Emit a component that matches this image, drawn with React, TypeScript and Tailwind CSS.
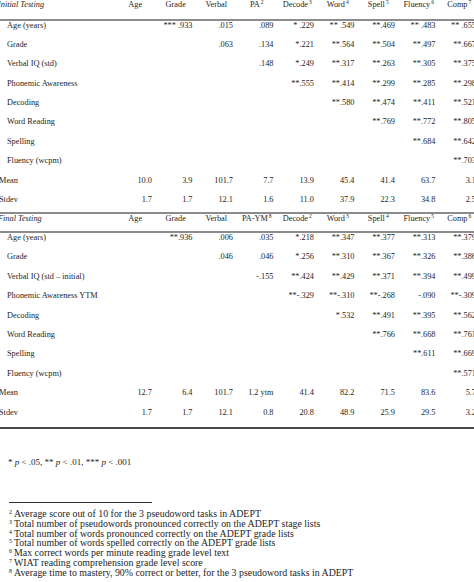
import React from 'react';

/**
 * Correlation table (initial / final testing) with footnotes.
 * Times-like serif, tight rows, right-aligned values.
 */

type RowData = { label: string; vals: string[]; indent?: boolean };

const initialRows: RowData[] = [
  { label: 'Age (years)', indent: true, vals: ['', '*** .933', '.015', '.089', '* .229', '** .549', '**.469', '** .483', '** .655'] },
  { label: 'Grade', indent: true, vals: ['', '', '.063', '.134', '*.221', '**.564', '**.504', '**.497', '**.667'] },
  { label: 'Verbal IQ (std)', indent: true, vals: ['', '', '', '.148', '*.249', '**.317', '**.263', '**.305', '**.375'] },
  { label: 'Phonemic Awareness', indent: true, vals: ['', '', '', '', '**.555', '**.414', '**.299', '**.285', '**.298'] },
  { label: 'Decoding', indent: true, vals: ['', '', '', '', '', '**.580', '**.474', '**.411', '**.521'] },
  { label: 'Word Reading', indent: true, vals: ['', '', '', '', '', '', '**.769', '**.772', '**.805'] },
  { label: 'Spelling', indent: true, vals: ['', '', '', '', '', '', '', '**.684', '**.642'] },
  { label: 'Fluency (wcpm)', indent: true, vals: ['', '', '', '', '', '', '', '', '**.703'] },
  { label: 'Mean', vals: ['10.0', '3.9', '101.7', '7.7', '13.9', '45.4', '41.4', '63.7', '3.1'] },
];
const initialStdev = ['1.7', '1.7', '12.1', '1.6', '11.0', '37.9', '22.3', '34.8', '2.5'];

const finalRows: RowData[] = [
  { label: 'Age (years)', indent: true, vals: ['', '**.936', '.006', '.035', '*.218', '**.347', '**.377', '**.313', '**.379'] },
  { label: 'Grade', indent: true, vals: ['', '', '.046', '.046', '*.256', '**.310', '**.367', '**.326', '**.386'] },
  { label: 'Verbal IQ (std – initial)', indent: true, vals: ['', '', '', '-.155', '**.424', '**.429', '**.371', '**.394', '**.499'] },
  { label: 'Phonemic Awareness YTM', indent: true, vals: ['', '', '', '', '**-.329', '**-.310', '**-.268', '-.090', '**-.309'] },
  { label: 'Decoding', indent: true, vals: ['', '', '', '', '', '*.532', '**.491', '**.395', '**.562'] },
  { label: 'Word Reading', indent: true, vals: ['', '', '', '', '', '', '**.766', '**.668', '**.761'] },
  { label: 'Spelling', indent: true, vals: ['', '', '', '', '', '', '', '**.611', '**.669'] },
  { label: 'Fluency (wcpm)', indent: true, vals: ['', '', '', '', '', '', '', '', '**.571'] },
  { label: 'Mean', vals: ['12.7', '6.4', '101.7', '1.2 ytm', '41.4', '82.2', '71.5', '83.6', '5.7'] },
  { label: 'Stdev', vals: ['1.7', '1.7', '12.1', '0.8', '20.8', '48.9', '25.9', '29.5', '3.2'] },
];

const Sup = ({ n }: { n: string }) => (
  <sup className="text-[5.5px] top-[-3px] ml-[1px]">{n}</sup>
);

const Row = ({ label, vals, indent, h = 'h-[19.4px]' }: RowData & { h?: string }) => (
  <div className={`grid grid-cols-[113.5px_repeat(9,40.5px)] ${h}`}>
    <div className={indent ? 'pl-[9px]' : 'pl-[1px]'}>{label}</div>
    {vals.map((v, i) => (
      <div key={i} className="text-right whitespace-pre">{v}</div>
    ))}
  </div>
);

const Header = ({ title, cols, h }: { title: string; cols: [string, string][]; h: string }) => (
  <div className={`grid grid-cols-[113.5px_repeat(9,40.5px)] ${h}`}>
    <div className="italic">{title}</div>
    {cols.map(([name, sup]) => (
      <div key={name} className="text-center pl-[7px] whitespace-nowrap">
        {name}
        {sup && <Sup n={sup} />}
      </div>
    ))}
  </div>
);

const footnotes: [string, string][] = [
  ['2', 'Average score out of 10 for the 3 pseudoword tasks in ADEPT'],
  ['3', 'Total number of pseudowords pronounced correctly on the ADEPT stage lists'],
  ['4', 'Total number of words pronounced correctly on the ADEPT grade lists'],
  ['5', 'Total number of words spelled correctly on the ADEPT grade lists'],
  ['6', 'Max correct words per minute reading grade level text'],
  ['7', 'WIAT reading comprehension grade level score'],
  ['8', 'Average time to mastery, 90% correct or better, for the 3 pseudoword tasks in ADEPT'],
];

export default function App() {
  return (
    <div
      className="w-[474px] h-[582px] overflow-hidden bg-white text-[#1e1e1e]"
      style={{ fontFamily: '"Liberation Serif", "Times New Roman", serif' }}
    >
      <div className="-ml-[2px] w-[478px] text-[8.3px] leading-[10px]">
        {/* Initial testing */}
        <Header
          title="Initial Testing"
          h="h-[18.5px]"
          cols={[['Age', ''], ['Grade', ''], ['Verbal', ''], ['PA', '2'], ['Decode', '3'], ['Word', '4'], ['Spell', '5'], ['Fluency', '6'], ['Comp', '7']]}
        />
        <div className="h-[2px] bg-[#8c8c8c]" />
        {initialRows.map((r) => (
          <Row key={'i' + r.label} {...r} />
        ))}
        <Row label="Stdev" vals={initialStdev} h="h-[17px]" />

        {/* Final testing */}
        <div className="h-[2px] bg-[#8c8c8c]" />
        <Header
          title="Final Testing"
          h="h-[17px]"
          cols={[['Age', ''], ['Grade', ''], ['Verbal', ''], ['PA-YM', '8'], ['Decode', '2'], ['Word', '3'], ['Spell', '4'], ['Fluency', '5'], ['Comp', '6']]}
        />
        <div className="h-[2px] bg-[#8c8c8c]" />
        {finalRows.map((r) => (
          <Row key={'f' + r.label} {...r} />
        ))}
        <div className="h-[2px] bg-[#4a4a4a]" />
      </div>

      {/* Significance note */}
      <div className="mt-[28px] pl-[8px] text-[9px] leading-[10px] whitespace-pre">
        * <i>p</i> &lt; .05, ** <i>p</i> &lt; .01, *** <i>p</i> &lt; .001
      </div>

      {/* Footnotes */}
      <div className="mt-[35px] ml-[9px] w-[143px] h-px bg-[#333]" />
      <div className="mt-[6px] pl-[9px] text-[9.9px] leading-[9.85px] whitespace-nowrap">
        {footnotes.map(([n, t]) => (
          <div key={n}>
            <sup className="text-[6px] top-[-3px] mr-[2px]">{n}</sup>
            {t}
          </div>
        ))}
      </div>
    </div>
  );
}
